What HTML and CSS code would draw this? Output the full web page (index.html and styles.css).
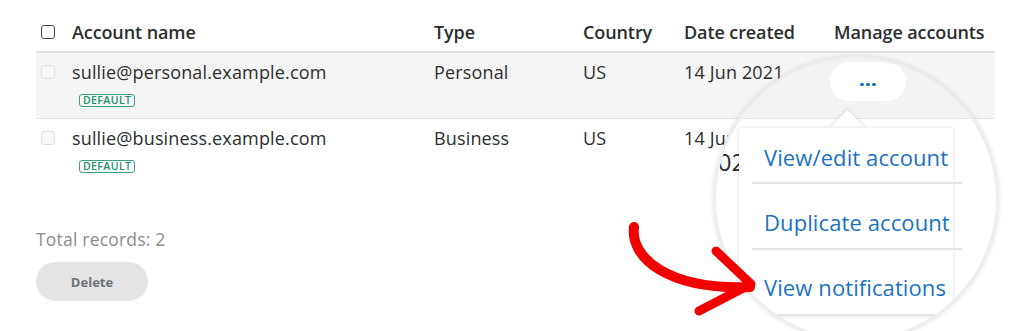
FILE: index.html
```html
<!DOCTYPE html>
<html>
<head>
<meta charset="utf-8">
<link rel="stylesheet" href="styles.css">
</head>
<body>
<div class="page">
  <div class="table">
    <div class="row head">
      <div class="cell chk"><span class="box dark"></span></div>
      <div class="cell">Account name</div>
      <div class="cell">Type</div>
      <div class="cell">Country</div>
      <div class="cell">Date created</div>
      <div class="cell">Manage accounts</div>
    </div>
    <div class="row body shade">
      <div class="cell chk"><span class="box"></span></div>
      <div class="cell acct">sullie@personal.example.com<span class="badge">DEFAULT</span></div>
      <div class="cell">Personal</div>
      <div class="cell">US</div>
      <div class="cell">14 Jun 2021</div>
      <div class="cell"></div>
    </div>
    <div class="row body">
      <div class="cell chk"><span class="box"></span></div>
      <div class="cell acct">sullie@business.example.com<span class="badge">DEFAULT</span></div>
      <div class="cell">Business</div>
      <div class="cell">US</div>
      <div class="cell">14 Jun 2021</div>
      <div class="cell"></div>
    </div>
  </div>
  <div class="total">Total records: 2</div>
  <button class="del">Delete</button>
</div>

<div class="lens">
  <div class="lens-band"></div>
  <div class="lens-year">2021</div>
  <div class="dots-pill"><span></span><span></span><span></span></div>
  <div class="caret"></div>
  <div class="menu">
    <div class="item item-1">View/edit account</div>
    <div class="item item-2">Duplicate account</div>
    <div class="item item-3">View notifications</div>
  </div>
</div>

<svg class="arrow" width="1024" height="331" viewBox="0 0 1024 331">
  <path d="M634 227 C 630 258, 668 290, 750 287" fill="none" stroke="#f20000" stroke-width="10" stroke-linecap="round"/>
  <path d="M716 251 L 751 284 L 699 311" fill="none" stroke="#f20000" stroke-width="9" stroke-linecap="round" stroke-linejoin="round"/>
</svg>
</body>
</html>
```
FILE: styles.css
```css
html, body {
  margin: 0;
  padding: 0;
  background: #fff;
}
body {
  width: 1024px;
  height: 331px;
  overflow: hidden;
  position: relative;
  font-family: "Open Sans", "Noto Sans", sans-serif;
  color: #2c2e2f;
}
.page {
  padding: 14px 29px 0 36px;
}
.table {
  width: 959px;
}
.row {
  display: grid;
  grid-template-columns: 36px 362px 149px 101px 150px 161px;
}
.head {
  height: 37px;
  border-bottom: 2px solid #e2e2e2;
  font-size: 18px;
  font-weight: 600;
  letter-spacing: -0.1px;
  align-items: start;
}
.head .cell {
  line-height: 36px;
}
.body {
  height: 65px;
  font-size: 18px;
  letter-spacing: 0.15px;
}
.body .cell {
  padding-top: 7px;
  line-height: 24px;
}
.shade {
  background: #f5f5f5;
  border-bottom: 1px solid #e4e4e4;
}
.chk {
  display: flex;
  padding-left: 5px;
}
.head .chk {
  align-items: center;
  height: 36px;
}
.body .chk {
  padding-top: 12px;
}
.box {
  display: block;
  width: 12px;
  height: 12px;
  border: 1px solid #dedede;
  border-radius: 3px;
  background: #f7f7f7;
}
.box.dark {
  border-color: #4a4a4a;
  background: #fff;
}
.acct {
  display: flex;
  flex-direction: column;
  align-items: flex-start;
}
.badge {
  margin-top: 10px;
  margin-left: 7px;
  font-size: 10.5px;
  line-height: 11px;
  letter-spacing: 0.4px;
  font-weight: 600;
  color: #20926e;
  border: 1px solid #3aa283;
  border-radius: 3px;
  padding: 0 3px;
}
.total {
  margin-top: 45px;
  font-size: 17.5px;
  letter-spacing: 0.2px;
  color: #8c8c8c;
  line-height: 20px;
}
.del {
  display: block;
  margin-top: 13px;
  width: 112px;
  height: 39px;
  border: none;
  border-radius: 20px;
  background: #e4e4e4;
  color: #6c7378;
  font-family: "Open Sans", "Noto Sans", sans-serif;
  font-weight: 700;
  font-size: 13px;
}

/* magnifier lens */
.lens {
  position: absolute;
  left: 713px;
  top: 56px;
  width: 280px;
  height: 280px;
  border-radius: 50%;
  border: 3px solid #eeeeee;
  background: #fff;
  overflow: hidden;
  box-shadow: 0 0 5px rgba(0, 0, 0, 0.12);
}
.lens-band {
  position: absolute;
  left: 0;
  top: 0;
  width: 100%;
  height: 59px;
  background: #f3f3f3;
  border-bottom: 1px solid #e6e6e6;
}
.lens-year {
  position: absolute;
  left: -12px;
  top: 86px;
  font-size: 24px;
  color: #2c2e2f;
}
.dots-pill {
  position: absolute;
  left: 114px;
  top: 3px;
  width: 76px;
  height: 39px;
  box-sizing: border-box;
  padding-top: 6px;
  border-radius: 20px;
  background: #fff;
  display: flex;
  align-items: center;
  justify-content: center;
  gap: 2.5px;
}
.dots-pill span {
  width: 3.5px;
  height: 3.5px;
  border-radius: 50%;
  background: #1a72c2;
}
.caret {
  position: absolute;
  left: 119px;
  top: 56px;
  width: 25px;
  height: 25px;
  background: #fff;
  transform: rotate(45deg);
  box-shadow: -1px -1px 3px rgba(0, 0, 0, 0.1);
}
.menu {
  position: absolute;
  left: 23px;
  top: 69px;
  width: 214px;
  background: #fff;
  border-radius: 4px;
  box-shadow: 0 0 4px rgba(0, 0, 0, 0.15);
}
.item {
  position: relative;
  box-sizing: border-box;
  padding-left: 25px;
  font-size: 22px;
  line-height: 49px;
  color: #1a72c2;
  letter-spacing: 0.1px;
  white-space: nowrap;
}
.item::after {
  content: "";
  position: absolute;
  left: 13px;
  right: -9px;
  bottom: 0;
  height: 2px;
  background: #e4e4e4;
}
.item-1 {
  height: 56px;
  padding-top: 5px;
}
.item-2 {
  height: 66px;
  padding-top: 14px;
}
.item-3 {
  height: 66px;
  padding-top: 13px;
}
.arrow {
  position: absolute;
  left: 0;
  top: 0;
  pointer-events: none;
}
```
